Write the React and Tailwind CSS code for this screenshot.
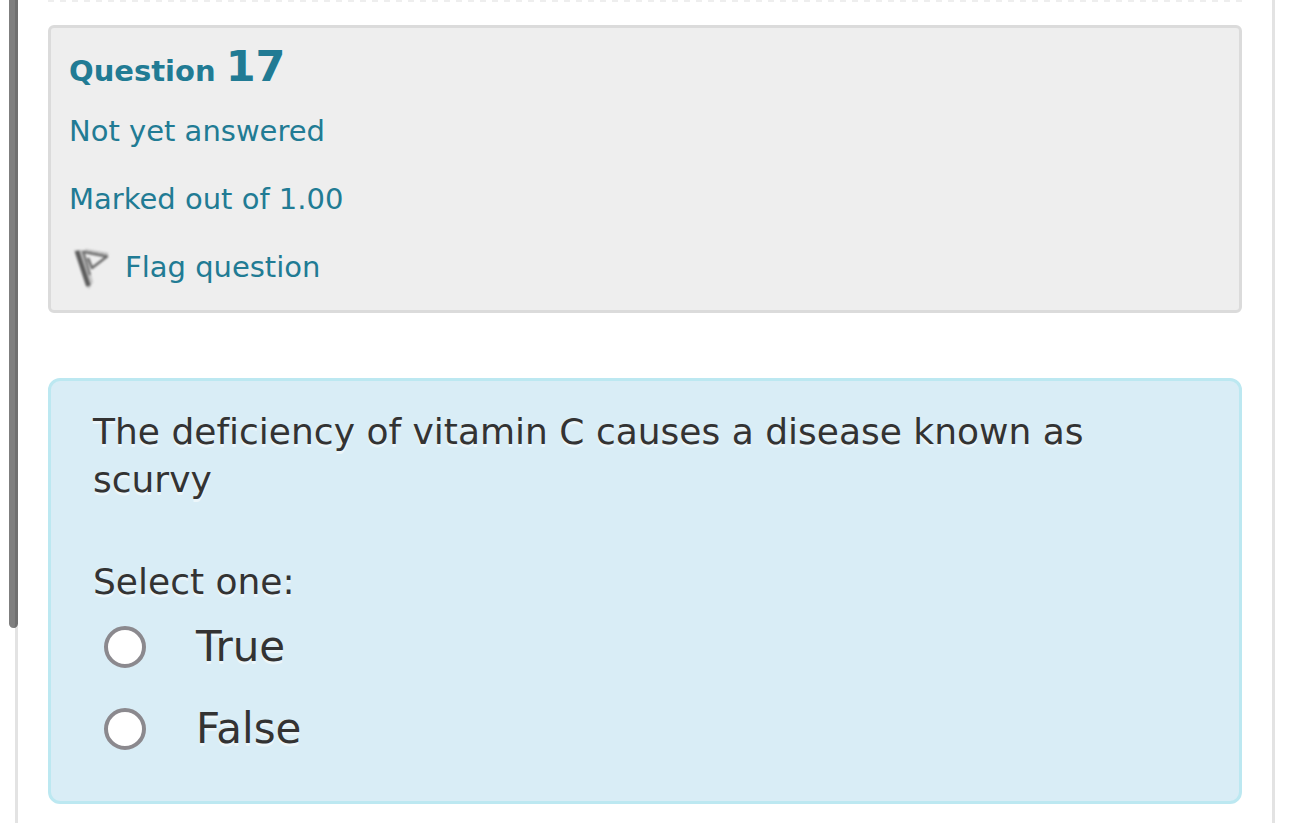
const question = {
    number: 17,
    status: "Not yet answered",
    grade: "Marked out of 1.00",
    text: "The deficiency of vitamin C causes a disease known as scurvy",
    options: ["True", "False"],
};

function FlagIcon() {
    return (
        <svg viewBox="0 0 48 44" className="w-12 h-11 shrink-0 blur-[1px]" fill="none" aria-hidden="true">
            <path d="M5 5 L15 5 L24 37 L20 44 L16 39 Z" fill="#c4c4c4" />
            <path d="M8 6 L19.500 41" stroke="#5c5c5c" strokeWidth="4.500" />
            <path d="M14 6 L21 30" stroke="#777" strokeWidth="2.500" />
            <path d="M15 7 L38 11.500 L23 23 L19 13" stroke="#6b6b6b" strokeWidth="2.500" strokeLinejoin="round" />
            <path d="M16 5 L39 9" stroke="#b8b8b8" strokeWidth="2" />
        </svg>
    );
}

function QuestionInfo({ number, status, grade }) {
    return (
        <section className="rounded-md border-3 border-[#dbdbdb] bg-[#eee] pt-2 pb-[21px] px-[18px] text-[29px] leading-11 text-[#217b94]">
            <h3 className="mb-2 font-bold leading-15">
                Question <span className="text-[43px]">{number}</span>
            </h3>
            <p>{status}</p>
            <p className="mt-6">{grade}</p>
            <a href="#flag" className="mt-6 flex items-center gap-2">
                <FlagIcon />
                Flag question
            </a>
        </section>
    );
}

function QuestionForm({ text, options }) {
    return (
        <form className="mt-[65px] rounded-xl border-3 border-[#bce8f1] bg-[#d9edf6] pt-[27px] pb-[47px] px-[42px] text-[36px] leading-12 text-[#333] [text-shadow:0_3px_0_rgba(255,255,255,0.5)]">
            <p>{text}</p>
            <fieldset className="mt-[54px]">
                <legend>Select one:</legend>
                <div className="mt-4 flex flex-col gap-8 pl-[11px]">
                    {options.map((option) => (
                        <label key={option} className="flex items-center gap-[50px] text-[42px] leading-[50px]">
                            <input
                                type="radio"
                                name="answer"
                                value={option}
                                className="size-[42px] shrink-0 appearance-none rounded-full border-4 border-[#8b898e] bg-white checked:bg-[#217b94]"
                            />
                            {option}
                        </label>
                    ))}
                </div>
            </fieldset>
        </form>
    );
}

export default function App() {
    return (
        <div className="relative min-h-screen bg-white px-[15px] font-['DejaVu_Sans',Verdana,sans-serif] [font-variant-ligatures:none]">
            {/* scroll thumb over the page edge */}
            <div className="absolute left-[9px] top-0 h-[628px] w-[9px] rounded-b-full border-r-3 border-[#707070] bg-[#7f7f7f]" />
            <main className="min-h-screen border-x-3 border-[#e3e3e3] px-[30px]">
                <div className="mb-[23px] h-0.5 bg-[repeating-linear-gradient(90deg,#eee_0_6px,transparent_6px_12px)]" />
                <QuestionInfo number={question.number} status={question.status} grade={question.grade} />
                <QuestionForm text={question.text} options={question.options} />
            </main>
        </div>
    );
}
